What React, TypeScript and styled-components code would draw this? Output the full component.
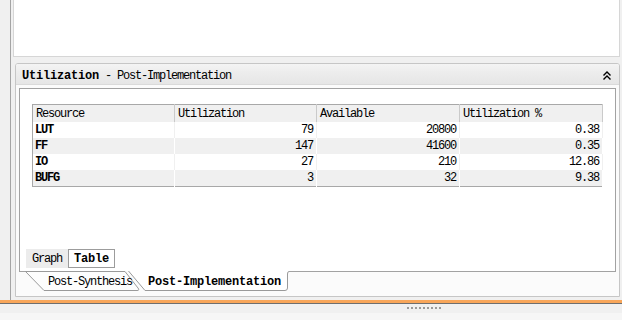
import React from 'react'
import styled, { createGlobalStyle } from 'styled-components'

const GlobalStyle = createGlobalStyle`
  html, body {
    margin: 0;
    padding: 0;
  }
  body {
    background: #f0f0f0;
    font-family: "Liberation Mono", "DejaVu Sans Mono", monospace;
    font-size: 12px;
    color: #000;
  }
`

const Page = styled.div`
  width: 622px;
  height: 320px;
  display: flex;
  flex-direction: column;
  overflow: hidden;
`

const Workspace = styled.div`
  display: flex;
  height: 300px;
  flex-shrink: 0;
`

const SideRail = styled.div`
  width: 10px;
  border-right: 1px solid #a4a4a4;
  background: #f0f0f0;
`

const Column = styled.div`
  flex: 1;
  display: flex;
  flex-direction: column;
  padding: 0 2px;
`

const TopPanel = styled.div`
  height: 56px;
  flex-shrink: 0;
  background: #fff;
  border: 1px solid #d6d6d6;
  border-top: none;
`

const UtilPanel = styled.section`
  height: 234px;
  box-sizing: border-box;
  flex-shrink: 0;
  margin: 6px 0 0 2px;
  display: flex;
  flex-direction: column;
  background: #fbfbfb;
  border: 1px solid #c6c6c6;
  border-radius: 3px 3px 0 0;
`

const PanelHeader = styled.header`
  height: 21px;
  flex-shrink: 0;
  display: flex;
  align-items: center;
  padding: 4px 8px 0 6px;
  box-sizing: border-box;
  background: linear-gradient(#f4f4f4, #ececec 45%, #e6e6e6);
  border-bottom: 1px solid #dadada;
  border-radius: 2px 2px 0 0;
`

const Title = styled.span<{ $bold?: boolean }>`
  font-weight: ${(p) => (p.$bold ? 'bold' : 'normal')};
  letter-spacing: ${(p) => (p.$bold ? '-0.2px' : '-1.2px')};
  white-space: pre;
`

const CollapseBtn = styled.span`
  margin: -2px 0 0 auto;
  width: 8px;
  height: 9px;
  display: flex;
`

const PanelBody = styled.div`
  flex: 1;
  display: flex;
  flex-direction: column;
  padding: 3px 3px 0;
`

const InnerBox = styled.div`
  height: 183px;
  flex-shrink: 0;
  box-sizing: border-box;
  display: flex;
  flex-direction: column;
  padding: 15px 6px 3px;
  background: #fff;
  border: 1px solid #a2a2a2;
  border-bottom: none;
`

const Grid = styled.table`
  width: 571px;
  margin: 0 6px;
  border-collapse: collapse;
  table-layout: fixed;
  border: 1px solid #a8a8a8;
  font-size: 12px;
  line-height: 15px;
  letter-spacing: -1.2px;
`

const HeadCell = styled.th`
  height: 16px;
  padding: 1px 3px 0;
  text-align: left;
  font-weight: normal;
  background: #f0f0f0;
  border-right: 1px solid #cacaca;
  white-space: nowrap;
`

const Row = styled.tr<{ $shade: boolean }>`
  background: ${(p) => (p.$shade ? '#f0f0f0' : '#fff')};
  td {
    border-right: 1px solid ${(p) => (p.$shade ? '#fff' : '#f0f0f0')};
  }
`

const Cell = styled.td<{ $name?: boolean }>`
  height: 15px;
  padding: 1px 3px 0 2px;
  text-align: ${(p) => (p.$name ? 'left' : 'right')};
  font-weight: ${(p) => (p.$name ? 'bold' : 'normal')};
  white-space: nowrap;
`

const ToggleRow = styled.div`
  margin-top: auto;
  display: flex;
`

const ToggleBtn = styled.div<{ $active?: boolean }>`
  height: 19px;
  box-sizing: border-box;
  display: flex;
  align-items: center;
  padding: 1px 5px 0;
  background: ${(p) => (p.$active ? '#fff' : '#ececec')};
  border: 1px solid ${(p) => (p.$active ? '#9c9c9c' : '#ececec')};
  font-weight: ${(p) => (p.$active ? 'bold' : 'normal')};
  letter-spacing: ${(p) => (p.$active ? '-0.2px' : '-1.2px')};
`

const TabStrip = styled.div`
  height: 20px;
  flex-shrink: 0;
  display: flex;
`

const Rule = styled.div<{ $grow?: boolean }>`
  width: 6px;
  flex: ${(p) => (p.$grow ? '1' : 'none')};
  border-top: 1px solid #a2a2a2;
`

const Tab = styled.div<{ $active?: boolean; $w: number; $pad: number }>`
  position: relative;
  width: ${(p) => p.$w}px;
  height: 20px;
  margin-left: ${(p) => (p.$active ? '-15px' : '0')};
  padding-left: ${(p) => p.$pad}px;
  box-sizing: border-box;
  display: flex;
  align-items: center;
  padding-top: 1px;
  font-weight: ${(p) => (p.$active ? 'bold' : 'normal')};
  letter-spacing: ${(p) => (p.$active ? '-0.2px' : '-1.2px')};
  svg {
    position: absolute;
    left: 0;
    top: 0;
  }
  span {
    position: relative;
  }
`

const OrangeBar = styled.div`
  height: 3px;
  flex-shrink: 0;
  background: #f8a65a;
  border-bottom: 1px solid #6e6e6e;
`

const StatusArea = styled.div`
  flex: 1;
  padding: 3px 0 0 407px;
  background: linear-gradient(#f0f0f0 0, #f0f0f0 9px, #f6f6f6 9px);
`

const Grip = styled.div`
  display: flex;
  gap: 2px;
`

const GripDot = styled.span`
  width: 2px;
  height: 2px;
  background: #9a9a9a;
`

const rows = [
  { name: 'LUT', used: '79', avail: '20800', pct: '0.38' },
  { name: 'FF', used: '147', avail: '41600', pct: '0.35' },
  { name: 'IO', used: '27', avail: '210', pct: '12.86' },
  { name: 'BUFG', used: '3', avail: '32', pct: '9.38' }
]

const App = () => {
  return (
    <Page>
      <GlobalStyle />
      <Workspace>
        <SideRail />
        <Column>
          <TopPanel />
          <UtilPanel>
            <PanelHeader>
              <Title $bold>Utilization</Title>
              <Title> - Post-Implementation</Title>
              <CollapseBtn>
                <svg width='8' height='9' viewBox='0 0 8 9'>
                  <polyline points='0.5,4.5 4,1 7.5,4.5' fill='none' stroke='#000' strokeWidth='1.4' />
                  <polyline points='0.5,8.5 4,5 7.5,8.5' fill='none' stroke='#000' strokeWidth='1.4' />
                </svg>
              </CollapseBtn>
            </PanelHeader>
            <PanelBody>
              <InnerBox>
                <Grid>
                  <colgroup>
                    <col style={ { width: 142 } } />
                    <col style={ { width: 142 } } />
                    <col style={ { width: 143 } } />
                    <col style={ { width: 143 } } />
                  </colgroup>
                  <thead>
                    <tr>
                      <HeadCell>Resource</HeadCell>
                      <HeadCell>Utilization</HeadCell>
                      <HeadCell>Available</HeadCell>
                      <HeadCell>Utilization %</HeadCell>
                    </tr>
                  </thead>
                  <tbody>
                    { rows.map((r, i) => (
                      <Row key={ `row-${i}` } $shade={ i % 2 === 1 }>
                        <Cell $name>{ r.name }</Cell>
                        <Cell>{ r.used }</Cell>
                        <Cell>{ r.avail }</Cell>
                        <Cell>{ r.pct }</Cell>
                      </Row>
                    )) }
                  </tbody>
                </Grid>
                <ToggleRow>
                  <ToggleBtn>Graph</ToggleBtn>
                  <ToggleBtn $active>Table</ToggleBtn>
                </ToggleRow>
              </InnerBox>
              <TabStrip>
                <Rule />
                <Tab $w={ 118 } $pad={ 23 }>
                  <svg width='118' height='20' viewBox='0 0 118 20'>
                    <path d='M0 0.5 L100 0.5 L113 17 Q115 19.5 112 19.5 L19 19.5 L0.5 0.5' fill='#fdfdfd' stroke='#9a9a9a' strokeWidth='1' />
                  </svg>
                  <span>Post-Synthesis</span>
                </Tab>
                <Tab $active $w={ 161 } $pad={ 20 }>
                  <svg width='161' height='20' viewBox='0 0 161 20'>
                    <path d='M0 0 L17 19.5 L157 19.5 Q159.5 19.5 159.5 17 L159.5 0 Z' fill='#fff' stroke='none' />
                    <path d='M0.5 0 L17 19.5 L157 19.5 Q159.5 19.5 159.5 17 L159.5 3 Q159.5 0.5 161 0.5' fill='none' stroke='#9a9a9a' strokeWidth='1' />
                  </svg>
                  <span>Post-Implementation</span>
                </Tab>
                <Rule $grow />
              </TabStrip>
            </PanelBody>
          </UtilPanel>
        </Column>
      </Workspace>
      <OrangeBar />
      <StatusArea>
        <Grip>
          { Array.from({ length: 9 }).map((_, i) => <GripDot key={ `dot-${i}` } />) }
        </Grip>
      </StatusArea>
    </Page>
  )
}

export default App
